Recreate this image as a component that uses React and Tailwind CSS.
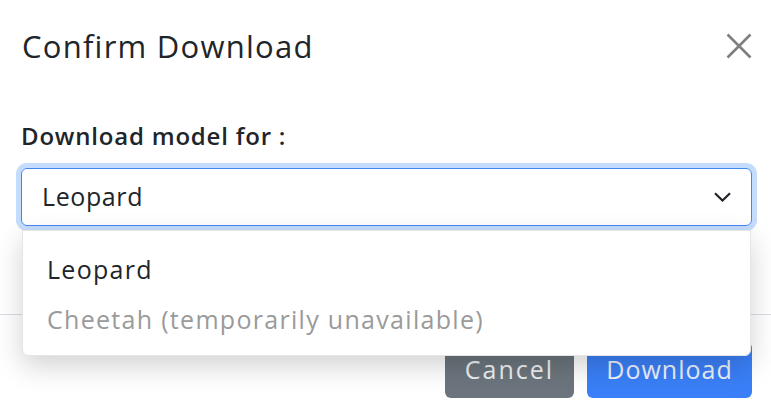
import React from 'react';

const font = { fontFamily: '"Open Sans", "Liberation Sans", sans-serif' };

function CloseIcon() {
    return (
        <svg width="26" height="26" viewBox="0 0 26 26" fill="none">
            <path d="M1.5 1.5L24.5 24.5M24.5 1.5L1.5 24.5" stroke="#7f7f7f" strokeWidth="2.6" />
        </svg>
    );
}

function Chevron() {
    return (
        <svg width="17" height="10" viewBox="0 0 17 10" fill="none">
            <path d="M1 1.2L8.5 8.5L16 1.2" stroke="#212529" strokeWidth="2.2" />
        </svg>
    );
}

export default function App() {
    const options = [
        { id: 1, label: 'Leopard', disabled: false },
        { id: 2, label: 'Cheetah (temporarily unavailable)', disabled: true },
    ];

    return (
        <div className="w-[771px] h-[420px] bg-white overflow-hidden text-[#212529]" style={font}>
            {/* header */}
            <div className="flex items-center justify-between pl-[22px] pr-[19px] pt-[24px] h-[88px]">
                <h5 className="text-[31px] leading-[40px] font-normal tracking-[1.25px] -mt-[20px]">Confirm Download</h5>
                <button className="-mt-[20px] flex items-center">
                    <CloseIcon />
                </button>
            </div>

            {/* body */}
            <div className="px-[21px] pt-[30px] h-[226px]">
                <label className="block text-[24px] leading-[36px] font-semibold tracking-[0.8px] mb-[14px]">Download model for :</label>
                <div className="relative">
                    <div className="h-[58px] w-[731px] flex items-center justify-between border border-[#4285f4] rounded-[6px] shadow-[0_0_0_5px_#c4dcfd] pl-[20px] pr-[20px]">
                        <span className="text-[25px] tracking-[0.6px]">Leopard</span>
                        <Chevron />
                    </div>

                    {/* open dropdown */}
                    <div className="absolute z-10 left-[1px] top-[62px] w-[729px] h-[126px] bg-white rounded-b-[6px] border border-[#e5e5e5] shadow-[0_10px_28px_rgba(0,0,0,0.18)] pt-[14px]">
                        {options.map((opt) => (
                            <div
                                key={opt.id}
                                className={`pl-[24px] h-[50px] flex items-center text-[25px] tracking-[1.3px] ${opt.disabled ? 'text-[#9a9a9a]' : 'text-[#212529]'}`}
                            >
                                {opt.label}
                            </div>
                        ))}
                    </div>
                </div>
            </div>

            {/* footer */}
            <div className="border-t border-[#dcdce6] flex justify-end gap-[13px] pr-[19px] pt-[27px]">
                <button className="h-[56px] w-[129px] rounded-[6px] bg-[#6c757d] text-[#eef0f2] text-[25px] tracking-[2px]">Cancel</button>
                <button className="h-[56px] w-[165px] rounded-[6px] bg-[#3a7ff7] text-[#eef2fb] text-[25px] tracking-[1px]">Download</button>
            </div>
        </div>
    );
}
